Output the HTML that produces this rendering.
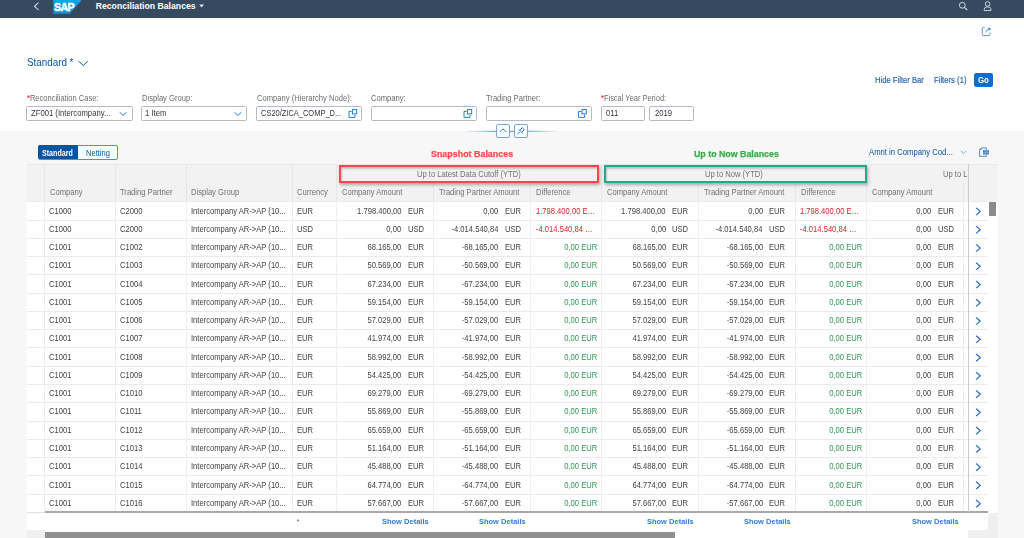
<!DOCTYPE html><html><head><meta charset="utf-8"><style>
html,body{margin:0;padding:0;}
body{width:1024px;height:538px;overflow:hidden;position:relative;background:#fff;font-family:"Liberation Sans", sans-serif;}
.t{position:absolute;line-height:normal;white-space:nowrap;}
.r{position:absolute;}
svg{position:absolute;overflow:visible;}
#w{position:absolute;left:0;top:0;width:1024px;height:538px;overflow:hidden;filter:blur(0.35px);}
</style></head><body><div id="w">
<div class="r" style="left:0.00px;top:0.00px;width:1024.00px;height:17.80px;background:#354a5f;"></div>
<svg style="left:0;top:0" width="1024" height="18"><polyline points="38.5,2.7 34.5,6.3 38.5,9.9" fill="none" stroke="#cfd6f2" stroke-width="1.1"/></svg>
<svg style="left:0;top:0" width="100" height="18"><defs><linearGradient id="sg" x1="0" y1="0" x2="0" y2="1"><stop offset="0" stop-color="#08aaea"/><stop offset="1" stop-color="#1a8fd6"/></linearGradient></defs><polygon points="53.3,-1 82.5,-1 69.8,13.8 53.3,13.8" fill="url(#sg)"/></svg>
<div class="t" style="top:0.90px;font-size:10.6px;color:#fff;font-weight:700;left:54.00px;transform-origin:0 0;letter-spacing:-0.6px;-webkit-text-stroke:0.45px #fff;">SAP</div>
<div class="t" style="top:0.90px;font-size:8.7px;color:#fff;font-weight:700;left:95.70px;transform-origin:0 0;">Reconciliation Balances</div>
<svg style="left:0;top:0" width="1024" height="18"><polygon points="199.2,4.6 204,4.6 201.6,7.4" fill="#d1e8ff"/></svg>
<svg style="left:0;top:0" width="1024" height="18"><circle cx="962.3" cy="5.3" r="2.9" fill="none" stroke="#d4e2f0" stroke-width="0.95"/><line x1="964.4" y1="7.4" x2="967.2" y2="10" stroke="#d4e2f0" stroke-width="1.1"/></svg>
<svg style="left:0;top:0" width="1024" height="18"><circle cx="987.6" cy="3.9" r="2.3" fill="none" stroke="#d4e2f0" stroke-width="0.9"/><path d="M984.2,10.5 L984.2,9.3 Q984.2,6.8 987.6,6.8 Q991,6.8 991,9.3 L991,10.5 Z" fill="none" stroke="#d4e2f0" stroke-width="0.9"/></svg>
<svg style="left:0;top:0" width="1024" height="60"><path d="M984.6,27.6 L983.2,27.6 Q982.2,27.6 982.2,28.6 L982.2,34.6 Q982.2,35.6 983.2,35.6 L989,35.6 Q990,35.6 990,34.6 L990,32.6" fill="none" stroke="#5a8ed0" stroke-width="0.95"/><path d="M985.5,32.6 Q986.3,29.6 989,29" fill="none" stroke="#5a8ed0" stroke-width="0.95"/><polygon points="988.3,27.2 991.2,28.9 988.6,30.8" fill="#4a84cc"/></svg>
<div class="t" style="top:56.60px;font-size:10.23px;color:#0854a0;left:26.70px;transform-origin:0 0;transform:scaleX(0.9615);">Standard *</div>
<svg style="left:0;top:0" width="200" height="80"><polyline points="78.6,61.1 83.2,65.5 87.8,61.1" fill="none" stroke="#0854a0" stroke-width="1"/></svg>
<div class="t" style="top:75.30px;font-size:8.87px;color:#2a66b0;left:874.70px;transform-origin:0 0;transform:scaleX(0.8621);-webkit-text-stroke:0.2px #2a66b0;">Hide Filter Bar</div>
<div class="t" style="top:75.30px;font-size:8.93px;color:#2a66b0;left:934.40px;transform-origin:0 0;transform:scaleX(0.8621);-webkit-text-stroke:0.2px #2a66b0;">Filters (1)</div>
<div class="r" style="left:973.9px;top:72.7px;width:19.2px;height:14.7px;background:#0a6ed1;border-radius:2.2px"></div>
<div class="t" style="top:75.30px;font-size:9.11px;color:#fff;font-weight:700;left:978.20px;transform-origin:0 0;transform:scaleX(0.8621);">Go</div>
<div class="t" style="top:92.90px;font-size:8.73px;color:#6a6d70;left:26.70px;transform-origin:0 0;transform:scaleX(0.8621);"><span style="color:#e00">*</span>Reconciliation Case:</div>
<div class="t" style="top:92.90px;font-size:8.82px;color:#6a6d70;left:141.70px;transform-origin:0 0;transform:scaleX(0.8621);">Display Group:</div>
<div class="t" style="top:92.90px;font-size:8.85px;color:#6a6d70;left:256.60px;transform-origin:0 0;transform:scaleX(0.8621);">Company (Hierarchy Node):</div>
<div class="t" style="top:92.90px;font-size:8.82px;color:#6a6d70;left:371.20px;transform-origin:0 0;transform:scaleX(0.8621);">Company:</div>
<div class="t" style="top:92.90px;font-size:8.82px;color:#6a6d70;left:486.10px;transform-origin:0 0;transform:scaleX(0.8621);">Trading Partner:</div>
<div class="t" style="top:92.90px;font-size:8.67px;color:#6a6d70;left:601.20px;transform-origin:0 0;transform:scaleX(0.8621);"><span style="color:#e00">*</span>Fiscal Year Period:</div>
<div class="r" style="left:26.40px;top:106.10px;width:104.20px;height:12.70px;background:#fff;border:1px solid #b3bac1;border-radius:1.5px"></div>
<div class="r" style="left:141.40px;top:106.10px;width:104.00px;height:12.70px;background:#fff;border:1px solid #b3bac1;border-radius:1.5px"></div>
<div class="r" style="left:256.30px;top:106.10px;width:104.10px;height:12.70px;background:#fff;border:1px solid #b3bac1;border-radius:1.5px"></div>
<div class="r" style="left:371.30px;top:106.10px;width:104.10px;height:12.70px;background:#fff;border:1px solid #b3bac1;border-radius:1.5px"></div>
<div class="r" style="left:486.10px;top:106.10px;width:103.60px;height:12.70px;background:#fff;border:1px solid #b3bac1;border-radius:1.5px"></div>
<div class="r" style="left:600.80px;top:106.10px;width:41.80px;height:12.70px;background:#fff;border:1px solid #b3bac1;border-radius:1.5px"></div>
<div class="r" style="left:649.40px;top:106.10px;width:42.40px;height:12.70px;background:#fff;border:1px solid #b3bac1;border-radius:1.5px"></div>
<div class="t" style="top:108.20px;font-size:8.93px;color:#32363a;left:31.10px;transform-origin:0 0;transform:scaleX(0.8621);">ZF001 (Intercompany...</div>
<div class="t" style="top:108.20px;font-size:8.93px;color:#32363a;left:144.60px;transform-origin:0 0;transform:scaleX(0.8621);">1 Item</div>
<div class="t" style="top:108.20px;font-size:8.68px;color:#32363a;left:261.20px;transform-origin:0 0;transform:scaleX(0.8621);">CS20/ZICA_COMP_D...</div>
<div class="t" style="top:108.20px;font-size:8.93px;color:#32363a;left:605.90px;transform-origin:0 0;transform:scaleX(0.8621);">011</div>
<div class="t" style="top:108.20px;font-size:8.93px;color:#32363a;left:654.50px;transform-origin:0 0;transform:scaleX(0.8621);">2019</div>
<svg style="left:0;top:0" width="1024" height="140"><polyline points="119.60,112.2 123.10,115.4 126.60,112.2" fill="none" stroke="#0a6ed1" stroke-width="0.9"/></svg>
<svg style="left:0;top:0" width="1024" height="140"><polyline points="234.50,112.2 238.00,115.4 241.50,112.2" fill="none" stroke="#0a6ed1" stroke-width="0.9"/></svg>
<svg style="left:0;top:0" width="1024" height="140"><path d="M351.60,111.4 L349.00,111.4 L349.00,117.4 L355.00,117.4 L355.00,114.8" fill="none" stroke="#0a6ed1" stroke-width="0.9"/><rect x="352.40" y="109.6" width="4.3" height="4.3" fill="#fff" stroke="#0a6ed1" stroke-width="0.9"/></svg>
<svg style="left:0;top:0" width="1024" height="140"><path d="M466.60,111.4 L464.00,111.4 L464.00,117.4 L470.00,117.4 L470.00,114.8" fill="none" stroke="#0a6ed1" stroke-width="0.9"/><rect x="467.40" y="109.6" width="4.3" height="4.3" fill="#fff" stroke="#0a6ed1" stroke-width="0.9"/></svg>
<svg style="left:0;top:0" width="1024" height="140"><path d="M581.20,111.4 L578.60,111.4 L578.60,117.4 L584.60,117.4 L584.60,114.8" fill="none" stroke="#0a6ed1" stroke-width="0.9"/><rect x="582.00" y="109.6" width="4.3" height="4.3" fill="#fff" stroke="#0a6ed1" stroke-width="0.9"/></svg>
<div class="r" style="left:0.00px;top:131.20px;width:1024.00px;height:406.80px;background:#f7f7f7;"></div>
<svg style="left:0;top:0" width="1024" height="140"><defs><linearGradient id="lg" x1="0" x2="1"><stop offset="0" stop-color="#0a6ed1" stop-opacity="0"/><stop offset="0.35" stop-color="#0a6ed1" stop-opacity="0.7"/><stop offset="0.65" stop-color="#0a6ed1" stop-opacity="0.7"/><stop offset="1" stop-color="#0a6ed1" stop-opacity="0"/></linearGradient></defs><rect x="463" y="130.8" width="97" height="1" fill="url(#lg)"/></svg>
<div class="r" style="left:496px;top:124.2px;width:12px;height:11.4px;background:#fff;border:1px solid #7aa6d8;border-radius:2px"></div>
<div class="r" style="left:514.1px;top:124.2px;width:12.2px;height:11.4px;background:#fff;border:1px solid #7aa6d8;border-radius:2px"></div>
<svg style="left:0;top:0" width="1024" height="140"><polyline points="499.8,132 503,128.8 506.2,132" fill="none" stroke="#0a6ed1" stroke-width="0.9"/><path d="M517.6,134.2 L519.8,131.9 M518.8,129.4 L522.6,133.2 M519.8,130.1 L522.3,127.6 L524.4,129.7 L521.9,132.2" fill="none" stroke="#0a6ed1" stroke-width="0.9"/></svg>
<div class="r" style="left:37.6px;top:145.4px;width:78.8px;height:13.1px;background:#fff;border:1px solid #4d8fd8;border-radius:2px"></div>
<div class="r" style="left:37.6px;top:145.4px;width:40.3px;height:14.1px;background:#0854a0;border-radius:2px 0 0 2px"></div>
<div class="t" style="top:148.60px;font-size:8.24px;color:#fff;font-weight:700;left:42.20px;transform-origin:0 0;transform:scaleX(0.8621);">Standard</div>
<div class="t" style="top:147.60px;font-size:8.75px;color:#0854a0;left:85.70px;transform-origin:0 0;transform:scaleX(0.8621);">Netting</div>
<div class="t" style="top:148.60px;font-size:9.35px;color:#ff4a4f;font-weight:700;left:431.10px;transform-origin:0 0;transform:scaleX(0.9524);-webkit-text-stroke:0.25px #ff4a4f;">Snapshot Balances</div>
<div class="t" style="top:148.60px;font-size:9.27px;color:#35ad48;font-weight:700;left:693.50px;transform-origin:0 0;transform:scaleX(0.9524);-webkit-text-stroke:0.25px #35ad48;">Up to Now Balances</div>
<div class="t" style="top:147.30px;font-size:8.93px;color:#0854a0;left:869.30px;transform-origin:0 0;transform:scaleX(0.8621);">Amnt in Company Cod...</div>
<svg style="left:0;top:0" width="1024" height="170"><polyline points="960.9,150.8 963.5,153.4 966.1,150.8" fill="none" stroke="#6a9cd8" stroke-width="0.8"/></svg>
<svg style="left:0;top:0" width="1024" height="170"><path d="M986.3,150.3 L986.3,147.9 L981.4,147.9 L979.6,149.7 L979.6,156.4 L986.3,156.4 L986.3,154.4" fill="none" stroke="#3b7bcc" stroke-width="0.85"/><path d="M981.4,147.9 L979.6,149.7 L981.4,149.7 Z" fill="#1f5fb0"/><rect x="983" y="150.2" width="5.9" height="4.3" fill="#3f7fcf"/><path d="M983.2,152.3 L988.7,152.3 M985,150.4 L985,154.3 M987,150.4 L987,154.3" stroke="#a9c6ea" stroke-width="0.45"/></svg>
<div class="r" style="left:27.00px;top:164.00px;width:970.50px;height:37.50px;background:#f2f2f2;"></div>
<div class="r" style="left:27.00px;top:164.00px;width:970.50px;height:0.90px;background:#e9e9e9;"></div>
<div class="r" style="left:27.00px;top:201.50px;width:960.50px;height:310.10px;background:#ffffff;"></div>
<div class="r" style="left:987.50px;top:201.50px;width:10.00px;height:311.10px;background:#ffffff;"></div>
<div class="r" style="left:989.40px;top:202.30px;width:6.30px;height:13.30px;background:#8c8c8c;"></div>
<div class="r" style="left:27.00px;top:512.60px;width:960.50px;height:17.70px;background:#ffffff;"></div>
<div class="r" style="left:987.50px;top:512.60px;width:10.00px;height:25.40px;background:#efefef;"></div>
<div class="r" style="left:27.00px;top:530.30px;width:17.70px;height:7.70px;background:#efefef;"></div>
<div class="r" style="left:44.70px;top:530.30px;width:923.60px;height:7.70px;background:#ffffff;"></div>
<div class="r" style="left:968.30px;top:530.30px;width:29.20px;height:7.70px;background:#efefef;"></div>
<div class="r" style="left:44.70px;top:532.00px;width:630.00px;height:6.00px;background:#8f8f8f;"></div>
<div class="r" style="left:44.00px;top:164.80px;width:1.00px;height:36.70px;background:#e6e6e6;"></div>
<div class="r" style="left:114.50px;top:164.80px;width:1.00px;height:36.70px;background:#e6e6e6;"></div>
<div class="r" style="left:185.50px;top:164.80px;width:1.00px;height:36.70px;background:#e6e6e6;"></div>
<div class="r" style="left:291.50px;top:164.80px;width:1.00px;height:36.70px;background:#e6e6e6;"></div>
<div class="r" style="left:335.50px;top:164.80px;width:1.00px;height:36.70px;background:#e6e6e6;"></div>
<div class="r" style="left:600.50px;top:164.80px;width:1.00px;height:36.70px;background:#e6e6e6;"></div>
<div class="r" style="left:866.00px;top:164.80px;width:1.00px;height:36.70px;background:#e6e6e6;"></div>
<div class="r" style="left:433.10px;top:183.30px;width:1.00px;height:18.20px;background:#e6e6e6;"></div>
<div class="r" style="left:530.00px;top:183.30px;width:1.00px;height:18.20px;background:#e6e6e6;"></div>
<div class="r" style="left:697.90px;top:183.30px;width:1.00px;height:18.20px;background:#e6e6e6;"></div>
<div class="r" style="left:794.80px;top:183.30px;width:1.00px;height:18.20px;background:#e6e6e6;"></div>
<div class="r" style="left:963.10px;top:183.30px;width:1.00px;height:18.20px;background:#e6e6e6;"></div>
<div class="r" style="left:27.00px;top:201.40px;width:960.50px;height:1.00px;background:#eaeaea;"></div>
<div class="r" style="left:27.00px;top:219.66px;width:960.50px;height:1.00px;background:#eaeaea;"></div>
<div class="r" style="left:27.00px;top:237.92px;width:960.50px;height:1.00px;background:#eaeaea;"></div>
<div class="r" style="left:27.00px;top:256.18px;width:960.50px;height:1.00px;background:#eaeaea;"></div>
<div class="r" style="left:27.00px;top:274.44px;width:960.50px;height:1.00px;background:#eaeaea;"></div>
<div class="r" style="left:27.00px;top:292.70px;width:960.50px;height:1.00px;background:#eaeaea;"></div>
<div class="r" style="left:27.00px;top:310.96px;width:960.50px;height:1.00px;background:#eaeaea;"></div>
<div class="r" style="left:27.00px;top:329.22px;width:960.50px;height:1.00px;background:#eaeaea;"></div>
<div class="r" style="left:27.00px;top:347.48px;width:960.50px;height:1.00px;background:#eaeaea;"></div>
<div class="r" style="left:27.00px;top:365.74px;width:960.50px;height:1.00px;background:#eaeaea;"></div>
<div class="r" style="left:27.00px;top:384.00px;width:960.50px;height:1.00px;background:#eaeaea;"></div>
<div class="r" style="left:27.00px;top:402.26px;width:960.50px;height:1.00px;background:#eaeaea;"></div>
<div class="r" style="left:27.00px;top:420.52px;width:960.50px;height:1.00px;background:#eaeaea;"></div>
<div class="r" style="left:27.00px;top:438.78px;width:960.50px;height:1.00px;background:#eaeaea;"></div>
<div class="r" style="left:27.00px;top:457.04px;width:960.50px;height:1.00px;background:#eaeaea;"></div>
<div class="r" style="left:27.00px;top:475.30px;width:960.50px;height:1.00px;background:#eaeaea;"></div>
<div class="r" style="left:27.00px;top:493.56px;width:960.50px;height:1.00px;background:#eaeaea;"></div>
<div class="r" style="left:44.00px;top:201.50px;width:1.00px;height:310.10px;background:#eeeeee;"></div>
<div class="r" style="left:114.50px;top:201.50px;width:1.00px;height:310.10px;background:#eeeeee;"></div>
<div class="r" style="left:185.50px;top:201.50px;width:1.00px;height:310.10px;background:#eeeeee;"></div>
<div class="r" style="left:291.50px;top:201.50px;width:1.00px;height:310.10px;background:#eeeeee;"></div>
<div class="r" style="left:335.50px;top:201.50px;width:1.00px;height:310.10px;background:#eeeeee;"></div>
<div class="r" style="left:600.50px;top:201.50px;width:1.00px;height:310.10px;background:#eeeeee;"></div>
<div class="r" style="left:866.00px;top:201.50px;width:1.00px;height:310.10px;background:#eeeeee;"></div>
<div class="r" style="left:433.10px;top:201.50px;width:1.00px;height:310.10px;background:#eeeeee;"></div>
<div class="r" style="left:530.00px;top:201.50px;width:1.00px;height:310.10px;background:#eeeeee;"></div>
<div class="r" style="left:697.90px;top:201.50px;width:1.00px;height:310.10px;background:#eeeeee;"></div>
<div class="r" style="left:794.80px;top:201.50px;width:1.00px;height:310.10px;background:#eeeeee;"></div>
<div class="r" style="left:963.10px;top:201.50px;width:1.00px;height:310.10px;background:#eeeeee;"></div>
<div class="r" style="left:44.50px;top:510.60px;width:943.00px;height:2.00px;background:#a8a8a8;"></div>
<div class="r" style="left:27.00px;top:511.60px;width:17.50px;height:1.00px;background:#e0e0e0;"></div>
<div class="r" style="left:967.80px;top:164.00px;width:1.60px;height:347.60px;background:#cbcbcb;"></div>
<div class="t" style="top:187.20px;font-size:8.82px;color:#6e7174;left:49.70px;transform-origin:0 0;transform:scaleX(0.8621);">Company</div>
<div class="t" style="top:187.20px;font-size:8.82px;color:#6e7174;left:120.20px;transform-origin:0 0;transform:scaleX(0.8621);">Trading Partner</div>
<div class="t" style="top:187.20px;font-size:8.82px;color:#6e7174;left:191.00px;transform-origin:0 0;transform:scaleX(0.8621);">Display Group</div>
<div class="t" style="top:187.20px;font-size:8.82px;color:#6e7174;left:297.00px;transform-origin:0 0;transform:scaleX(0.8621);">Currency</div>
<div class="t" style="top:187.20px;font-size:8.82px;color:#6e7174;left:341.60px;transform-origin:0 0;transform:scaleX(0.8621);">Company Amount</div>
<div class="t" style="top:187.20px;font-size:8.82px;color:#6e7174;left:438.90px;transform-origin:0 0;transform:scaleX(0.8621);">Trading Partner Amount</div>
<div class="t" style="top:187.20px;font-size:8.82px;color:#6e7174;left:535.70px;transform-origin:0 0;transform:scaleX(0.8621);">Difference</div>
<div class="t" style="top:187.20px;font-size:8.82px;color:#6e7174;left:606.60px;transform-origin:0 0;transform:scaleX(0.8621);">Company Amount</div>
<div class="t" style="top:187.20px;font-size:8.82px;color:#6e7174;left:703.70px;transform-origin:0 0;transform:scaleX(0.8621);">Trading Partner Amount</div>
<div class="t" style="top:187.20px;font-size:8.82px;color:#6e7174;left:800.50px;transform-origin:0 0;transform:scaleX(0.8621);">Difference</div>
<div class="t" style="top:187.20px;font-size:8.82px;color:#6e7174;left:871.90px;transform-origin:0 0;transform:scaleX(0.8621);">Company Amount</div>
<div class="t" style="top:169.10px;font-size:8.82px;color:#6e7174;left:416.70px;transform-origin:0 0;transform:scaleX(0.8621);">Up to Latest Data Cutoff (YTD)</div>
<div class="t" style="top:169.10px;font-size:8.82px;color:#6e7174;left:704.80px;transform-origin:0 0;transform:scaleX(0.8621);">Up to Now (YTD)</div>
<div class="t" style="top:169.10px;font-size:8.82px;color:#6e7174;left:943.10px;transform-origin:0 0;transform:scaleX(0.8621);width:28.42px;overflow:hidden;text-overflow:ellipsis;text-overflow:clip;">Up to Latest Data Cutoff (YTD)</div>
<div class="t" style="top:205.60px;font-size:8.82px;color:#3f4246;left:49.20px;transform-origin:0 0;transform:scaleX(0.8621);">C1000</div>
<div class="t" style="top:205.60px;font-size:8.82px;color:#3f4246;left:120.00px;transform-origin:0 0;transform:scaleX(0.8621);">C2000</div>
<div class="t" style="top:205.60px;font-size:8.82px;color:#3f4246;left:191.00px;transform-origin:0 0;transform:scaleX(0.8621);width:112.52px;overflow:hidden;text-overflow:ellipsis;">Intercompany AR-&gt;AP (10...</div>
<div class="t" style="top:205.60px;font-size:8.82px;color:#3f4246;left:297.00px;transform-origin:0 0;transform:scaleX(0.8621);">EUR</div>
<div class="t" style="top:205.60px;font-size:8.82px;color:#3f4246;right:622.90px;text-align:right;transform-origin:100% 0;transform:scaleX(0.8621);">1.798.400,00</div>
<div class="t" style="top:205.60px;font-size:8.82px;color:#3f4246;left:407.60px;transform-origin:0 0;transform:scaleX(0.8621);">EUR</div>
<div class="t" style="top:205.60px;font-size:8.82px;color:#3f4246;right:526.00px;text-align:right;transform-origin:100% 0;transform:scaleX(0.8621);">0,00</div>
<div class="t" style="top:205.60px;font-size:8.82px;color:#3f4246;left:504.50px;transform-origin:0 0;transform:scaleX(0.8621);">EUR</div>
<div class="t" style="top:205.60px;font-size:8.82px;color:#d6262b;left:535.50px;transform-origin:0 0;transform:scaleX(0.8621);width:70.18px;overflow:hidden;text-overflow:ellipsis;">1.798.400,00 EUR</div>
<div class="t" style="top:205.60px;font-size:8.82px;color:#3f4246;right:358.10px;text-align:right;transform-origin:100% 0;transform:scaleX(0.8621);">1.798.400,00</div>
<div class="t" style="top:205.60px;font-size:8.82px;color:#3f4246;left:672.40px;transform-origin:0 0;transform:scaleX(0.8621);">EUR</div>
<div class="t" style="top:205.60px;font-size:8.82px;color:#3f4246;right:261.20px;text-align:right;transform-origin:100% 0;transform:scaleX(0.8621);">0,00</div>
<div class="t" style="top:205.60px;font-size:8.82px;color:#3f4246;left:769.30px;transform-origin:0 0;transform:scaleX(0.8621);">EUR</div>
<div class="t" style="top:205.60px;font-size:8.82px;color:#d6262b;left:800.30px;transform-origin:0 0;transform:scaleX(0.8621);width:70.18px;overflow:hidden;text-overflow:ellipsis;">1.798.400,00 EUR</div>
<div class="t" style="top:205.60px;font-size:8.82px;color:#3f4246;right:92.90px;text-align:right;transform-origin:100% 0;transform:scaleX(0.8621);">0,00</div>
<div class="t" style="top:205.60px;font-size:8.82px;color:#3f4246;left:937.60px;transform-origin:0 0;transform:scaleX(0.8621);">EUR</div>
<svg style="left:0;top:0" width="1024" height="538"><polyline points="976.2,207.90 980.2,211.50 976.2,215.10" fill="none" stroke="#2a68b8" stroke-width="1.2"/></svg>
<div class="t" style="top:223.86px;font-size:8.82px;color:#3f4246;left:49.20px;transform-origin:0 0;transform:scaleX(0.8621);">C1000</div>
<div class="t" style="top:223.86px;font-size:8.82px;color:#3f4246;left:120.00px;transform-origin:0 0;transform:scaleX(0.8621);">C2000</div>
<div class="t" style="top:223.86px;font-size:8.82px;color:#3f4246;left:191.00px;transform-origin:0 0;transform:scaleX(0.8621);width:112.52px;overflow:hidden;text-overflow:ellipsis;">Intercompany AR-&gt;AP (10...</div>
<div class="t" style="top:223.86px;font-size:8.82px;color:#3f4246;left:297.00px;transform-origin:0 0;transform:scaleX(0.8621);">USD</div>
<div class="t" style="top:223.86px;font-size:8.82px;color:#3f4246;right:622.90px;text-align:right;transform-origin:100% 0;transform:scaleX(0.8621);">0,00</div>
<div class="t" style="top:223.86px;font-size:8.82px;color:#3f4246;left:407.60px;transform-origin:0 0;transform:scaleX(0.8621);">USD</div>
<div class="t" style="top:223.86px;font-size:8.82px;color:#3f4246;right:526.00px;text-align:right;transform-origin:100% 0;transform:scaleX(0.8621);">-4.014.540,84</div>
<div class="t" style="top:223.86px;font-size:8.82px;color:#3f4246;left:504.50px;transform-origin:0 0;transform:scaleX(0.8621);">USD</div>
<div class="t" style="top:223.86px;font-size:8.82px;color:#d6262b;left:535.50px;transform-origin:0 0;transform:scaleX(0.8621);width:70.18px;overflow:hidden;text-overflow:ellipsis;">-4.014.540,84 USD</div>
<div class="t" style="top:223.86px;font-size:8.82px;color:#3f4246;right:358.10px;text-align:right;transform-origin:100% 0;transform:scaleX(0.8621);">0,00</div>
<div class="t" style="top:223.86px;font-size:8.82px;color:#3f4246;left:672.40px;transform-origin:0 0;transform:scaleX(0.8621);">USD</div>
<div class="t" style="top:223.86px;font-size:8.82px;color:#3f4246;right:261.20px;text-align:right;transform-origin:100% 0;transform:scaleX(0.8621);">-4.014.540,84</div>
<div class="t" style="top:223.86px;font-size:8.82px;color:#3f4246;left:769.30px;transform-origin:0 0;transform:scaleX(0.8621);">USD</div>
<div class="t" style="top:223.86px;font-size:8.82px;color:#d6262b;left:800.30px;transform-origin:0 0;transform:scaleX(0.8621);width:70.18px;overflow:hidden;text-overflow:ellipsis;">-4.014.540,84 USD</div>
<div class="t" style="top:223.86px;font-size:8.82px;color:#3f4246;right:92.90px;text-align:right;transform-origin:100% 0;transform:scaleX(0.8621);">0,00</div>
<div class="t" style="top:223.86px;font-size:8.82px;color:#3f4246;left:937.60px;transform-origin:0 0;transform:scaleX(0.8621);">USD</div>
<svg style="left:0;top:0" width="1024" height="538"><polyline points="976.2,226.16 980.2,229.76 976.2,233.36" fill="none" stroke="#2a68b8" stroke-width="1.2"/></svg>
<div class="t" style="top:242.12px;font-size:8.82px;color:#3f4246;left:49.20px;transform-origin:0 0;transform:scaleX(0.8621);">C1001</div>
<div class="t" style="top:242.12px;font-size:8.82px;color:#3f4246;left:120.00px;transform-origin:0 0;transform:scaleX(0.8621);">C1002</div>
<div class="t" style="top:242.12px;font-size:8.82px;color:#3f4246;left:191.00px;transform-origin:0 0;transform:scaleX(0.8621);width:112.52px;overflow:hidden;text-overflow:ellipsis;">Intercompany AR-&gt;AP (10...</div>
<div class="t" style="top:242.12px;font-size:8.82px;color:#3f4246;left:297.00px;transform-origin:0 0;transform:scaleX(0.8621);">EUR</div>
<div class="t" style="top:242.12px;font-size:8.82px;color:#3f4246;right:622.90px;text-align:right;transform-origin:100% 0;transform:scaleX(0.8621);">68.165,00</div>
<div class="t" style="top:242.12px;font-size:8.82px;color:#3f4246;left:407.60px;transform-origin:0 0;transform:scaleX(0.8621);">EUR</div>
<div class="t" style="top:242.12px;font-size:8.82px;color:#3f4246;right:526.00px;text-align:right;transform-origin:100% 0;transform:scaleX(0.8621);">-68.165,00</div>
<div class="t" style="top:242.12px;font-size:8.82px;color:#3f4246;left:504.50px;transform-origin:0 0;transform:scaleX(0.8621);">EUR</div>
<div class="t" style="top:242.12px;font-size:8.82px;color:#2f9558;right:427.10px;text-align:right;transform-origin:100% 0;transform:scaleX(0.8621);">0,00 EUR</div>
<div class="t" style="top:242.12px;font-size:8.82px;color:#3f4246;right:358.10px;text-align:right;transform-origin:100% 0;transform:scaleX(0.8621);">68.165,00</div>
<div class="t" style="top:242.12px;font-size:8.82px;color:#3f4246;left:672.40px;transform-origin:0 0;transform:scaleX(0.8621);">EUR</div>
<div class="t" style="top:242.12px;font-size:8.82px;color:#3f4246;right:261.20px;text-align:right;transform-origin:100% 0;transform:scaleX(0.8621);">-68.165,00</div>
<div class="t" style="top:242.12px;font-size:8.82px;color:#3f4246;left:769.30px;transform-origin:0 0;transform:scaleX(0.8621);">EUR</div>
<div class="t" style="top:242.12px;font-size:8.82px;color:#2f9558;right:161.60px;text-align:right;transform-origin:100% 0;transform:scaleX(0.8621);">0,00 EUR</div>
<div class="t" style="top:242.12px;font-size:8.82px;color:#3f4246;right:92.90px;text-align:right;transform-origin:100% 0;transform:scaleX(0.8621);">0,00</div>
<div class="t" style="top:242.12px;font-size:8.82px;color:#3f4246;left:937.60px;transform-origin:0 0;transform:scaleX(0.8621);">EUR</div>
<svg style="left:0;top:0" width="1024" height="538"><polyline points="976.2,244.42 980.2,248.02 976.2,251.62" fill="none" stroke="#2a68b8" stroke-width="1.2"/></svg>
<div class="t" style="top:260.38px;font-size:8.82px;color:#3f4246;left:49.20px;transform-origin:0 0;transform:scaleX(0.8621);">C1001</div>
<div class="t" style="top:260.38px;font-size:8.82px;color:#3f4246;left:120.00px;transform-origin:0 0;transform:scaleX(0.8621);">C1003</div>
<div class="t" style="top:260.38px;font-size:8.82px;color:#3f4246;left:191.00px;transform-origin:0 0;transform:scaleX(0.8621);width:112.52px;overflow:hidden;text-overflow:ellipsis;">Intercompany AR-&gt;AP (10...</div>
<div class="t" style="top:260.38px;font-size:8.82px;color:#3f4246;left:297.00px;transform-origin:0 0;transform:scaleX(0.8621);">EUR</div>
<div class="t" style="top:260.38px;font-size:8.82px;color:#3f4246;right:622.90px;text-align:right;transform-origin:100% 0;transform:scaleX(0.8621);">50.569,00</div>
<div class="t" style="top:260.38px;font-size:8.82px;color:#3f4246;left:407.60px;transform-origin:0 0;transform:scaleX(0.8621);">EUR</div>
<div class="t" style="top:260.38px;font-size:8.82px;color:#3f4246;right:526.00px;text-align:right;transform-origin:100% 0;transform:scaleX(0.8621);">-50.569,00</div>
<div class="t" style="top:260.38px;font-size:8.82px;color:#3f4246;left:504.50px;transform-origin:0 0;transform:scaleX(0.8621);">EUR</div>
<div class="t" style="top:260.38px;font-size:8.82px;color:#2f9558;right:427.10px;text-align:right;transform-origin:100% 0;transform:scaleX(0.8621);">0,00 EUR</div>
<div class="t" style="top:260.38px;font-size:8.82px;color:#3f4246;right:358.10px;text-align:right;transform-origin:100% 0;transform:scaleX(0.8621);">50.569,00</div>
<div class="t" style="top:260.38px;font-size:8.82px;color:#3f4246;left:672.40px;transform-origin:0 0;transform:scaleX(0.8621);">EUR</div>
<div class="t" style="top:260.38px;font-size:8.82px;color:#3f4246;right:261.20px;text-align:right;transform-origin:100% 0;transform:scaleX(0.8621);">-50.569,00</div>
<div class="t" style="top:260.38px;font-size:8.82px;color:#3f4246;left:769.30px;transform-origin:0 0;transform:scaleX(0.8621);">EUR</div>
<div class="t" style="top:260.38px;font-size:8.82px;color:#2f9558;right:161.60px;text-align:right;transform-origin:100% 0;transform:scaleX(0.8621);">0,00 EUR</div>
<div class="t" style="top:260.38px;font-size:8.82px;color:#3f4246;right:92.90px;text-align:right;transform-origin:100% 0;transform:scaleX(0.8621);">0,00</div>
<div class="t" style="top:260.38px;font-size:8.82px;color:#3f4246;left:937.60px;transform-origin:0 0;transform:scaleX(0.8621);">EUR</div>
<svg style="left:0;top:0" width="1024" height="538"><polyline points="976.2,262.68 980.2,266.28 976.2,269.88" fill="none" stroke="#2a68b8" stroke-width="1.2"/></svg>
<div class="t" style="top:278.64px;font-size:8.82px;color:#3f4246;left:49.20px;transform-origin:0 0;transform:scaleX(0.8621);">C1001</div>
<div class="t" style="top:278.64px;font-size:8.82px;color:#3f4246;left:120.00px;transform-origin:0 0;transform:scaleX(0.8621);">C1004</div>
<div class="t" style="top:278.64px;font-size:8.82px;color:#3f4246;left:191.00px;transform-origin:0 0;transform:scaleX(0.8621);width:112.52px;overflow:hidden;text-overflow:ellipsis;">Intercompany AR-&gt;AP (10...</div>
<div class="t" style="top:278.64px;font-size:8.82px;color:#3f4246;left:297.00px;transform-origin:0 0;transform:scaleX(0.8621);">EUR</div>
<div class="t" style="top:278.64px;font-size:8.82px;color:#3f4246;right:622.90px;text-align:right;transform-origin:100% 0;transform:scaleX(0.8621);">67.234,00</div>
<div class="t" style="top:278.64px;font-size:8.82px;color:#3f4246;left:407.60px;transform-origin:0 0;transform:scaleX(0.8621);">EUR</div>
<div class="t" style="top:278.64px;font-size:8.82px;color:#3f4246;right:526.00px;text-align:right;transform-origin:100% 0;transform:scaleX(0.8621);">-67.234,00</div>
<div class="t" style="top:278.64px;font-size:8.82px;color:#3f4246;left:504.50px;transform-origin:0 0;transform:scaleX(0.8621);">EUR</div>
<div class="t" style="top:278.64px;font-size:8.82px;color:#2f9558;right:427.10px;text-align:right;transform-origin:100% 0;transform:scaleX(0.8621);">0,00 EUR</div>
<div class="t" style="top:278.64px;font-size:8.82px;color:#3f4246;right:358.10px;text-align:right;transform-origin:100% 0;transform:scaleX(0.8621);">67.234,00</div>
<div class="t" style="top:278.64px;font-size:8.82px;color:#3f4246;left:672.40px;transform-origin:0 0;transform:scaleX(0.8621);">EUR</div>
<div class="t" style="top:278.64px;font-size:8.82px;color:#3f4246;right:261.20px;text-align:right;transform-origin:100% 0;transform:scaleX(0.8621);">-67.234,00</div>
<div class="t" style="top:278.64px;font-size:8.82px;color:#3f4246;left:769.30px;transform-origin:0 0;transform:scaleX(0.8621);">EUR</div>
<div class="t" style="top:278.64px;font-size:8.82px;color:#2f9558;right:161.60px;text-align:right;transform-origin:100% 0;transform:scaleX(0.8621);">0,00 EUR</div>
<div class="t" style="top:278.64px;font-size:8.82px;color:#3f4246;right:92.90px;text-align:right;transform-origin:100% 0;transform:scaleX(0.8621);">0,00</div>
<div class="t" style="top:278.64px;font-size:8.82px;color:#3f4246;left:937.60px;transform-origin:0 0;transform:scaleX(0.8621);">EUR</div>
<svg style="left:0;top:0" width="1024" height="538"><polyline points="976.2,280.94 980.2,284.54 976.2,288.14" fill="none" stroke="#2a68b8" stroke-width="1.2"/></svg>
<div class="t" style="top:296.90px;font-size:8.82px;color:#3f4246;left:49.20px;transform-origin:0 0;transform:scaleX(0.8621);">C1001</div>
<div class="t" style="top:296.90px;font-size:8.82px;color:#3f4246;left:120.00px;transform-origin:0 0;transform:scaleX(0.8621);">C1005</div>
<div class="t" style="top:296.90px;font-size:8.82px;color:#3f4246;left:191.00px;transform-origin:0 0;transform:scaleX(0.8621);width:112.52px;overflow:hidden;text-overflow:ellipsis;">Intercompany AR-&gt;AP (10...</div>
<div class="t" style="top:296.90px;font-size:8.82px;color:#3f4246;left:297.00px;transform-origin:0 0;transform:scaleX(0.8621);">EUR</div>
<div class="t" style="top:296.90px;font-size:8.82px;color:#3f4246;right:622.90px;text-align:right;transform-origin:100% 0;transform:scaleX(0.8621);">59.154,00</div>
<div class="t" style="top:296.90px;font-size:8.82px;color:#3f4246;left:407.60px;transform-origin:0 0;transform:scaleX(0.8621);">EUR</div>
<div class="t" style="top:296.90px;font-size:8.82px;color:#3f4246;right:526.00px;text-align:right;transform-origin:100% 0;transform:scaleX(0.8621);">-59.154,00</div>
<div class="t" style="top:296.90px;font-size:8.82px;color:#3f4246;left:504.50px;transform-origin:0 0;transform:scaleX(0.8621);">EUR</div>
<div class="t" style="top:296.90px;font-size:8.82px;color:#2f9558;right:427.10px;text-align:right;transform-origin:100% 0;transform:scaleX(0.8621);">0,00 EUR</div>
<div class="t" style="top:296.90px;font-size:8.82px;color:#3f4246;right:358.10px;text-align:right;transform-origin:100% 0;transform:scaleX(0.8621);">59.154,00</div>
<div class="t" style="top:296.90px;font-size:8.82px;color:#3f4246;left:672.40px;transform-origin:0 0;transform:scaleX(0.8621);">EUR</div>
<div class="t" style="top:296.90px;font-size:8.82px;color:#3f4246;right:261.20px;text-align:right;transform-origin:100% 0;transform:scaleX(0.8621);">-59.154,00</div>
<div class="t" style="top:296.90px;font-size:8.82px;color:#3f4246;left:769.30px;transform-origin:0 0;transform:scaleX(0.8621);">EUR</div>
<div class="t" style="top:296.90px;font-size:8.82px;color:#2f9558;right:161.60px;text-align:right;transform-origin:100% 0;transform:scaleX(0.8621);">0,00 EUR</div>
<div class="t" style="top:296.90px;font-size:8.82px;color:#3f4246;right:92.90px;text-align:right;transform-origin:100% 0;transform:scaleX(0.8621);">0,00</div>
<div class="t" style="top:296.90px;font-size:8.82px;color:#3f4246;left:937.60px;transform-origin:0 0;transform:scaleX(0.8621);">EUR</div>
<svg style="left:0;top:0" width="1024" height="538"><polyline points="976.2,299.20 980.2,302.80 976.2,306.40" fill="none" stroke="#2a68b8" stroke-width="1.2"/></svg>
<div class="t" style="top:315.16px;font-size:8.82px;color:#3f4246;left:49.20px;transform-origin:0 0;transform:scaleX(0.8621);">C1001</div>
<div class="t" style="top:315.16px;font-size:8.82px;color:#3f4246;left:120.00px;transform-origin:0 0;transform:scaleX(0.8621);">C1006</div>
<div class="t" style="top:315.16px;font-size:8.82px;color:#3f4246;left:191.00px;transform-origin:0 0;transform:scaleX(0.8621);width:112.52px;overflow:hidden;text-overflow:ellipsis;">Intercompany AR-&gt;AP (10...</div>
<div class="t" style="top:315.16px;font-size:8.82px;color:#3f4246;left:297.00px;transform-origin:0 0;transform:scaleX(0.8621);">EUR</div>
<div class="t" style="top:315.16px;font-size:8.82px;color:#3f4246;right:622.90px;text-align:right;transform-origin:100% 0;transform:scaleX(0.8621);">57.029,00</div>
<div class="t" style="top:315.16px;font-size:8.82px;color:#3f4246;left:407.60px;transform-origin:0 0;transform:scaleX(0.8621);">EUR</div>
<div class="t" style="top:315.16px;font-size:8.82px;color:#3f4246;right:526.00px;text-align:right;transform-origin:100% 0;transform:scaleX(0.8621);">-57.029,00</div>
<div class="t" style="top:315.16px;font-size:8.82px;color:#3f4246;left:504.50px;transform-origin:0 0;transform:scaleX(0.8621);">EUR</div>
<div class="t" style="top:315.16px;font-size:8.82px;color:#2f9558;right:427.10px;text-align:right;transform-origin:100% 0;transform:scaleX(0.8621);">0,00 EUR</div>
<div class="t" style="top:315.16px;font-size:8.82px;color:#3f4246;right:358.10px;text-align:right;transform-origin:100% 0;transform:scaleX(0.8621);">57.029,00</div>
<div class="t" style="top:315.16px;font-size:8.82px;color:#3f4246;left:672.40px;transform-origin:0 0;transform:scaleX(0.8621);">EUR</div>
<div class="t" style="top:315.16px;font-size:8.82px;color:#3f4246;right:261.20px;text-align:right;transform-origin:100% 0;transform:scaleX(0.8621);">-57.029,00</div>
<div class="t" style="top:315.16px;font-size:8.82px;color:#3f4246;left:769.30px;transform-origin:0 0;transform:scaleX(0.8621);">EUR</div>
<div class="t" style="top:315.16px;font-size:8.82px;color:#2f9558;right:161.60px;text-align:right;transform-origin:100% 0;transform:scaleX(0.8621);">0,00 EUR</div>
<div class="t" style="top:315.16px;font-size:8.82px;color:#3f4246;right:92.90px;text-align:right;transform-origin:100% 0;transform:scaleX(0.8621);">0,00</div>
<div class="t" style="top:315.16px;font-size:8.82px;color:#3f4246;left:937.60px;transform-origin:0 0;transform:scaleX(0.8621);">EUR</div>
<svg style="left:0;top:0" width="1024" height="538"><polyline points="976.2,317.46 980.2,321.06 976.2,324.66" fill="none" stroke="#2a68b8" stroke-width="1.2"/></svg>
<div class="t" style="top:333.42px;font-size:8.82px;color:#3f4246;left:49.20px;transform-origin:0 0;transform:scaleX(0.8621);">C1001</div>
<div class="t" style="top:333.42px;font-size:8.82px;color:#3f4246;left:120.00px;transform-origin:0 0;transform:scaleX(0.8621);">C1007</div>
<div class="t" style="top:333.42px;font-size:8.82px;color:#3f4246;left:191.00px;transform-origin:0 0;transform:scaleX(0.8621);width:112.52px;overflow:hidden;text-overflow:ellipsis;">Intercompany AR-&gt;AP (10...</div>
<div class="t" style="top:333.42px;font-size:8.82px;color:#3f4246;left:297.00px;transform-origin:0 0;transform:scaleX(0.8621);">EUR</div>
<div class="t" style="top:333.42px;font-size:8.82px;color:#3f4246;right:622.90px;text-align:right;transform-origin:100% 0;transform:scaleX(0.8621);">41.974,00</div>
<div class="t" style="top:333.42px;font-size:8.82px;color:#3f4246;left:407.60px;transform-origin:0 0;transform:scaleX(0.8621);">EUR</div>
<div class="t" style="top:333.42px;font-size:8.82px;color:#3f4246;right:526.00px;text-align:right;transform-origin:100% 0;transform:scaleX(0.8621);">-41.974,00</div>
<div class="t" style="top:333.42px;font-size:8.82px;color:#3f4246;left:504.50px;transform-origin:0 0;transform:scaleX(0.8621);">EUR</div>
<div class="t" style="top:333.42px;font-size:8.82px;color:#2f9558;right:427.10px;text-align:right;transform-origin:100% 0;transform:scaleX(0.8621);">0,00 EUR</div>
<div class="t" style="top:333.42px;font-size:8.82px;color:#3f4246;right:358.10px;text-align:right;transform-origin:100% 0;transform:scaleX(0.8621);">41.974,00</div>
<div class="t" style="top:333.42px;font-size:8.82px;color:#3f4246;left:672.40px;transform-origin:0 0;transform:scaleX(0.8621);">EUR</div>
<div class="t" style="top:333.42px;font-size:8.82px;color:#3f4246;right:261.20px;text-align:right;transform-origin:100% 0;transform:scaleX(0.8621);">-41.974,00</div>
<div class="t" style="top:333.42px;font-size:8.82px;color:#3f4246;left:769.30px;transform-origin:0 0;transform:scaleX(0.8621);">EUR</div>
<div class="t" style="top:333.42px;font-size:8.82px;color:#2f9558;right:161.60px;text-align:right;transform-origin:100% 0;transform:scaleX(0.8621);">0,00 EUR</div>
<div class="t" style="top:333.42px;font-size:8.82px;color:#3f4246;right:92.90px;text-align:right;transform-origin:100% 0;transform:scaleX(0.8621);">0,00</div>
<div class="t" style="top:333.42px;font-size:8.82px;color:#3f4246;left:937.60px;transform-origin:0 0;transform:scaleX(0.8621);">EUR</div>
<svg style="left:0;top:0" width="1024" height="538"><polyline points="976.2,335.72 980.2,339.32 976.2,342.92" fill="none" stroke="#2a68b8" stroke-width="1.2"/></svg>
<div class="t" style="top:351.68px;font-size:8.82px;color:#3f4246;left:49.20px;transform-origin:0 0;transform:scaleX(0.8621);">C1001</div>
<div class="t" style="top:351.68px;font-size:8.82px;color:#3f4246;left:120.00px;transform-origin:0 0;transform:scaleX(0.8621);">C1008</div>
<div class="t" style="top:351.68px;font-size:8.82px;color:#3f4246;left:191.00px;transform-origin:0 0;transform:scaleX(0.8621);width:112.52px;overflow:hidden;text-overflow:ellipsis;">Intercompany AR-&gt;AP (10...</div>
<div class="t" style="top:351.68px;font-size:8.82px;color:#3f4246;left:297.00px;transform-origin:0 0;transform:scaleX(0.8621);">EUR</div>
<div class="t" style="top:351.68px;font-size:8.82px;color:#3f4246;right:622.90px;text-align:right;transform-origin:100% 0;transform:scaleX(0.8621);">58.992,00</div>
<div class="t" style="top:351.68px;font-size:8.82px;color:#3f4246;left:407.60px;transform-origin:0 0;transform:scaleX(0.8621);">EUR</div>
<div class="t" style="top:351.68px;font-size:8.82px;color:#3f4246;right:526.00px;text-align:right;transform-origin:100% 0;transform:scaleX(0.8621);">-58.992,00</div>
<div class="t" style="top:351.68px;font-size:8.82px;color:#3f4246;left:504.50px;transform-origin:0 0;transform:scaleX(0.8621);">EUR</div>
<div class="t" style="top:351.68px;font-size:8.82px;color:#2f9558;right:427.10px;text-align:right;transform-origin:100% 0;transform:scaleX(0.8621);">0,00 EUR</div>
<div class="t" style="top:351.68px;font-size:8.82px;color:#3f4246;right:358.10px;text-align:right;transform-origin:100% 0;transform:scaleX(0.8621);">58.992,00</div>
<div class="t" style="top:351.68px;font-size:8.82px;color:#3f4246;left:672.40px;transform-origin:0 0;transform:scaleX(0.8621);">EUR</div>
<div class="t" style="top:351.68px;font-size:8.82px;color:#3f4246;right:261.20px;text-align:right;transform-origin:100% 0;transform:scaleX(0.8621);">-58.992,00</div>
<div class="t" style="top:351.68px;font-size:8.82px;color:#3f4246;left:769.30px;transform-origin:0 0;transform:scaleX(0.8621);">EUR</div>
<div class="t" style="top:351.68px;font-size:8.82px;color:#2f9558;right:161.60px;text-align:right;transform-origin:100% 0;transform:scaleX(0.8621);">0,00 EUR</div>
<div class="t" style="top:351.68px;font-size:8.82px;color:#3f4246;right:92.90px;text-align:right;transform-origin:100% 0;transform:scaleX(0.8621);">0,00</div>
<div class="t" style="top:351.68px;font-size:8.82px;color:#3f4246;left:937.60px;transform-origin:0 0;transform:scaleX(0.8621);">EUR</div>
<svg style="left:0;top:0" width="1024" height="538"><polyline points="976.2,353.98 980.2,357.58 976.2,361.18" fill="none" stroke="#2a68b8" stroke-width="1.2"/></svg>
<div class="t" style="top:369.94px;font-size:8.82px;color:#3f4246;left:49.20px;transform-origin:0 0;transform:scaleX(0.8621);">C1001</div>
<div class="t" style="top:369.94px;font-size:8.82px;color:#3f4246;left:120.00px;transform-origin:0 0;transform:scaleX(0.8621);">C1009</div>
<div class="t" style="top:369.94px;font-size:8.82px;color:#3f4246;left:191.00px;transform-origin:0 0;transform:scaleX(0.8621);width:112.52px;overflow:hidden;text-overflow:ellipsis;">Intercompany AR-&gt;AP (10...</div>
<div class="t" style="top:369.94px;font-size:8.82px;color:#3f4246;left:297.00px;transform-origin:0 0;transform:scaleX(0.8621);">EUR</div>
<div class="t" style="top:369.94px;font-size:8.82px;color:#3f4246;right:622.90px;text-align:right;transform-origin:100% 0;transform:scaleX(0.8621);">54.425,00</div>
<div class="t" style="top:369.94px;font-size:8.82px;color:#3f4246;left:407.60px;transform-origin:0 0;transform:scaleX(0.8621);">EUR</div>
<div class="t" style="top:369.94px;font-size:8.82px;color:#3f4246;right:526.00px;text-align:right;transform-origin:100% 0;transform:scaleX(0.8621);">-54.425,00</div>
<div class="t" style="top:369.94px;font-size:8.82px;color:#3f4246;left:504.50px;transform-origin:0 0;transform:scaleX(0.8621);">EUR</div>
<div class="t" style="top:369.94px;font-size:8.82px;color:#2f9558;right:427.10px;text-align:right;transform-origin:100% 0;transform:scaleX(0.8621);">0,00 EUR</div>
<div class="t" style="top:369.94px;font-size:8.82px;color:#3f4246;right:358.10px;text-align:right;transform-origin:100% 0;transform:scaleX(0.8621);">54.425,00</div>
<div class="t" style="top:369.94px;font-size:8.82px;color:#3f4246;left:672.40px;transform-origin:0 0;transform:scaleX(0.8621);">EUR</div>
<div class="t" style="top:369.94px;font-size:8.82px;color:#3f4246;right:261.20px;text-align:right;transform-origin:100% 0;transform:scaleX(0.8621);">-54.425,00</div>
<div class="t" style="top:369.94px;font-size:8.82px;color:#3f4246;left:769.30px;transform-origin:0 0;transform:scaleX(0.8621);">EUR</div>
<div class="t" style="top:369.94px;font-size:8.82px;color:#2f9558;right:161.60px;text-align:right;transform-origin:100% 0;transform:scaleX(0.8621);">0,00 EUR</div>
<div class="t" style="top:369.94px;font-size:8.82px;color:#3f4246;right:92.90px;text-align:right;transform-origin:100% 0;transform:scaleX(0.8621);">0,00</div>
<div class="t" style="top:369.94px;font-size:8.82px;color:#3f4246;left:937.60px;transform-origin:0 0;transform:scaleX(0.8621);">EUR</div>
<svg style="left:0;top:0" width="1024" height="538"><polyline points="976.2,372.24 980.2,375.84 976.2,379.44" fill="none" stroke="#2a68b8" stroke-width="1.2"/></svg>
<div class="t" style="top:388.20px;font-size:8.82px;color:#3f4246;left:49.20px;transform-origin:0 0;transform:scaleX(0.8621);">C1001</div>
<div class="t" style="top:388.20px;font-size:8.82px;color:#3f4246;left:120.00px;transform-origin:0 0;transform:scaleX(0.8621);">C1010</div>
<div class="t" style="top:388.20px;font-size:8.82px;color:#3f4246;left:191.00px;transform-origin:0 0;transform:scaleX(0.8621);width:112.52px;overflow:hidden;text-overflow:ellipsis;">Intercompany AR-&gt;AP (10...</div>
<div class="t" style="top:388.20px;font-size:8.82px;color:#3f4246;left:297.00px;transform-origin:0 0;transform:scaleX(0.8621);">EUR</div>
<div class="t" style="top:388.20px;font-size:8.82px;color:#3f4246;right:622.90px;text-align:right;transform-origin:100% 0;transform:scaleX(0.8621);">69.279,00</div>
<div class="t" style="top:388.20px;font-size:8.82px;color:#3f4246;left:407.60px;transform-origin:0 0;transform:scaleX(0.8621);">EUR</div>
<div class="t" style="top:388.20px;font-size:8.82px;color:#3f4246;right:526.00px;text-align:right;transform-origin:100% 0;transform:scaleX(0.8621);">-69.279,00</div>
<div class="t" style="top:388.20px;font-size:8.82px;color:#3f4246;left:504.50px;transform-origin:0 0;transform:scaleX(0.8621);">EUR</div>
<div class="t" style="top:388.20px;font-size:8.82px;color:#2f9558;right:427.10px;text-align:right;transform-origin:100% 0;transform:scaleX(0.8621);">0,00 EUR</div>
<div class="t" style="top:388.20px;font-size:8.82px;color:#3f4246;right:358.10px;text-align:right;transform-origin:100% 0;transform:scaleX(0.8621);">69.279,00</div>
<div class="t" style="top:388.20px;font-size:8.82px;color:#3f4246;left:672.40px;transform-origin:0 0;transform:scaleX(0.8621);">EUR</div>
<div class="t" style="top:388.20px;font-size:8.82px;color:#3f4246;right:261.20px;text-align:right;transform-origin:100% 0;transform:scaleX(0.8621);">-69.279,00</div>
<div class="t" style="top:388.20px;font-size:8.82px;color:#3f4246;left:769.30px;transform-origin:0 0;transform:scaleX(0.8621);">EUR</div>
<div class="t" style="top:388.20px;font-size:8.82px;color:#2f9558;right:161.60px;text-align:right;transform-origin:100% 0;transform:scaleX(0.8621);">0,00 EUR</div>
<div class="t" style="top:388.20px;font-size:8.82px;color:#3f4246;right:92.90px;text-align:right;transform-origin:100% 0;transform:scaleX(0.8621);">0,00</div>
<div class="t" style="top:388.20px;font-size:8.82px;color:#3f4246;left:937.60px;transform-origin:0 0;transform:scaleX(0.8621);">EUR</div>
<svg style="left:0;top:0" width="1024" height="538"><polyline points="976.2,390.50 980.2,394.10 976.2,397.70" fill="none" stroke="#2a68b8" stroke-width="1.2"/></svg>
<div class="t" style="top:406.46px;font-size:8.82px;color:#3f4246;left:49.20px;transform-origin:0 0;transform:scaleX(0.8621);">C1001</div>
<div class="t" style="top:406.46px;font-size:8.82px;color:#3f4246;left:120.00px;transform-origin:0 0;transform:scaleX(0.8621);">C1011</div>
<div class="t" style="top:406.46px;font-size:8.82px;color:#3f4246;left:191.00px;transform-origin:0 0;transform:scaleX(0.8621);width:112.52px;overflow:hidden;text-overflow:ellipsis;">Intercompany AR-&gt;AP (10...</div>
<div class="t" style="top:406.46px;font-size:8.82px;color:#3f4246;left:297.00px;transform-origin:0 0;transform:scaleX(0.8621);">EUR</div>
<div class="t" style="top:406.46px;font-size:8.82px;color:#3f4246;right:622.90px;text-align:right;transform-origin:100% 0;transform:scaleX(0.8621);">55.869,00</div>
<div class="t" style="top:406.46px;font-size:8.82px;color:#3f4246;left:407.60px;transform-origin:0 0;transform:scaleX(0.8621);">EUR</div>
<div class="t" style="top:406.46px;font-size:8.82px;color:#3f4246;right:526.00px;text-align:right;transform-origin:100% 0;transform:scaleX(0.8621);">-55.869,00</div>
<div class="t" style="top:406.46px;font-size:8.82px;color:#3f4246;left:504.50px;transform-origin:0 0;transform:scaleX(0.8621);">EUR</div>
<div class="t" style="top:406.46px;font-size:8.82px;color:#2f9558;right:427.10px;text-align:right;transform-origin:100% 0;transform:scaleX(0.8621);">0,00 EUR</div>
<div class="t" style="top:406.46px;font-size:8.82px;color:#3f4246;right:358.10px;text-align:right;transform-origin:100% 0;transform:scaleX(0.8621);">55.869,00</div>
<div class="t" style="top:406.46px;font-size:8.82px;color:#3f4246;left:672.40px;transform-origin:0 0;transform:scaleX(0.8621);">EUR</div>
<div class="t" style="top:406.46px;font-size:8.82px;color:#3f4246;right:261.20px;text-align:right;transform-origin:100% 0;transform:scaleX(0.8621);">-55.869,00</div>
<div class="t" style="top:406.46px;font-size:8.82px;color:#3f4246;left:769.30px;transform-origin:0 0;transform:scaleX(0.8621);">EUR</div>
<div class="t" style="top:406.46px;font-size:8.82px;color:#2f9558;right:161.60px;text-align:right;transform-origin:100% 0;transform:scaleX(0.8621);">0,00 EUR</div>
<div class="t" style="top:406.46px;font-size:8.82px;color:#3f4246;right:92.90px;text-align:right;transform-origin:100% 0;transform:scaleX(0.8621);">0,00</div>
<div class="t" style="top:406.46px;font-size:8.82px;color:#3f4246;left:937.60px;transform-origin:0 0;transform:scaleX(0.8621);">EUR</div>
<svg style="left:0;top:0" width="1024" height="538"><polyline points="976.2,408.76 980.2,412.36 976.2,415.96" fill="none" stroke="#2a68b8" stroke-width="1.2"/></svg>
<div class="t" style="top:424.72px;font-size:8.82px;color:#3f4246;left:49.20px;transform-origin:0 0;transform:scaleX(0.8621);">C1001</div>
<div class="t" style="top:424.72px;font-size:8.82px;color:#3f4246;left:120.00px;transform-origin:0 0;transform:scaleX(0.8621);">C1012</div>
<div class="t" style="top:424.72px;font-size:8.82px;color:#3f4246;left:191.00px;transform-origin:0 0;transform:scaleX(0.8621);width:112.52px;overflow:hidden;text-overflow:ellipsis;">Intercompany AR-&gt;AP (10...</div>
<div class="t" style="top:424.72px;font-size:8.82px;color:#3f4246;left:297.00px;transform-origin:0 0;transform:scaleX(0.8621);">EUR</div>
<div class="t" style="top:424.72px;font-size:8.82px;color:#3f4246;right:622.90px;text-align:right;transform-origin:100% 0;transform:scaleX(0.8621);">65.659,00</div>
<div class="t" style="top:424.72px;font-size:8.82px;color:#3f4246;left:407.60px;transform-origin:0 0;transform:scaleX(0.8621);">EUR</div>
<div class="t" style="top:424.72px;font-size:8.82px;color:#3f4246;right:526.00px;text-align:right;transform-origin:100% 0;transform:scaleX(0.8621);">-65.659,00</div>
<div class="t" style="top:424.72px;font-size:8.82px;color:#3f4246;left:504.50px;transform-origin:0 0;transform:scaleX(0.8621);">EUR</div>
<div class="t" style="top:424.72px;font-size:8.82px;color:#2f9558;right:427.10px;text-align:right;transform-origin:100% 0;transform:scaleX(0.8621);">0,00 EUR</div>
<div class="t" style="top:424.72px;font-size:8.82px;color:#3f4246;right:358.10px;text-align:right;transform-origin:100% 0;transform:scaleX(0.8621);">65.659,00</div>
<div class="t" style="top:424.72px;font-size:8.82px;color:#3f4246;left:672.40px;transform-origin:0 0;transform:scaleX(0.8621);">EUR</div>
<div class="t" style="top:424.72px;font-size:8.82px;color:#3f4246;right:261.20px;text-align:right;transform-origin:100% 0;transform:scaleX(0.8621);">-65.659,00</div>
<div class="t" style="top:424.72px;font-size:8.82px;color:#3f4246;left:769.30px;transform-origin:0 0;transform:scaleX(0.8621);">EUR</div>
<div class="t" style="top:424.72px;font-size:8.82px;color:#2f9558;right:161.60px;text-align:right;transform-origin:100% 0;transform:scaleX(0.8621);">0,00 EUR</div>
<div class="t" style="top:424.72px;font-size:8.82px;color:#3f4246;right:92.90px;text-align:right;transform-origin:100% 0;transform:scaleX(0.8621);">0,00</div>
<div class="t" style="top:424.72px;font-size:8.82px;color:#3f4246;left:937.60px;transform-origin:0 0;transform:scaleX(0.8621);">EUR</div>
<svg style="left:0;top:0" width="1024" height="538"><polyline points="976.2,427.02 980.2,430.62 976.2,434.22" fill="none" stroke="#2a68b8" stroke-width="1.2"/></svg>
<div class="t" style="top:442.98px;font-size:8.82px;color:#3f4246;left:49.20px;transform-origin:0 0;transform:scaleX(0.8621);">C1001</div>
<div class="t" style="top:442.98px;font-size:8.82px;color:#3f4246;left:120.00px;transform-origin:0 0;transform:scaleX(0.8621);">C1013</div>
<div class="t" style="top:442.98px;font-size:8.82px;color:#3f4246;left:191.00px;transform-origin:0 0;transform:scaleX(0.8621);width:112.52px;overflow:hidden;text-overflow:ellipsis;">Intercompany AR-&gt;AP (10...</div>
<div class="t" style="top:442.98px;font-size:8.82px;color:#3f4246;left:297.00px;transform-origin:0 0;transform:scaleX(0.8621);">EUR</div>
<div class="t" style="top:442.98px;font-size:8.82px;color:#3f4246;right:622.90px;text-align:right;transform-origin:100% 0;transform:scaleX(0.8621);">51.164,00</div>
<div class="t" style="top:442.98px;font-size:8.82px;color:#3f4246;left:407.60px;transform-origin:0 0;transform:scaleX(0.8621);">EUR</div>
<div class="t" style="top:442.98px;font-size:8.82px;color:#3f4246;right:526.00px;text-align:right;transform-origin:100% 0;transform:scaleX(0.8621);">-51.164,00</div>
<div class="t" style="top:442.98px;font-size:8.82px;color:#3f4246;left:504.50px;transform-origin:0 0;transform:scaleX(0.8621);">EUR</div>
<div class="t" style="top:442.98px;font-size:8.82px;color:#2f9558;right:427.10px;text-align:right;transform-origin:100% 0;transform:scaleX(0.8621);">0,00 EUR</div>
<div class="t" style="top:442.98px;font-size:8.82px;color:#3f4246;right:358.10px;text-align:right;transform-origin:100% 0;transform:scaleX(0.8621);">51.164,00</div>
<div class="t" style="top:442.98px;font-size:8.82px;color:#3f4246;left:672.40px;transform-origin:0 0;transform:scaleX(0.8621);">EUR</div>
<div class="t" style="top:442.98px;font-size:8.82px;color:#3f4246;right:261.20px;text-align:right;transform-origin:100% 0;transform:scaleX(0.8621);">-51.164,00</div>
<div class="t" style="top:442.98px;font-size:8.82px;color:#3f4246;left:769.30px;transform-origin:0 0;transform:scaleX(0.8621);">EUR</div>
<div class="t" style="top:442.98px;font-size:8.82px;color:#2f9558;right:161.60px;text-align:right;transform-origin:100% 0;transform:scaleX(0.8621);">0,00 EUR</div>
<div class="t" style="top:442.98px;font-size:8.82px;color:#3f4246;right:92.90px;text-align:right;transform-origin:100% 0;transform:scaleX(0.8621);">0,00</div>
<div class="t" style="top:442.98px;font-size:8.82px;color:#3f4246;left:937.60px;transform-origin:0 0;transform:scaleX(0.8621);">EUR</div>
<svg style="left:0;top:0" width="1024" height="538"><polyline points="976.2,445.28 980.2,448.88 976.2,452.48" fill="none" stroke="#2a68b8" stroke-width="1.2"/></svg>
<div class="t" style="top:461.24px;font-size:8.82px;color:#3f4246;left:49.20px;transform-origin:0 0;transform:scaleX(0.8621);">C1001</div>
<div class="t" style="top:461.24px;font-size:8.82px;color:#3f4246;left:120.00px;transform-origin:0 0;transform:scaleX(0.8621);">C1014</div>
<div class="t" style="top:461.24px;font-size:8.82px;color:#3f4246;left:191.00px;transform-origin:0 0;transform:scaleX(0.8621);width:112.52px;overflow:hidden;text-overflow:ellipsis;">Intercompany AR-&gt;AP (10...</div>
<div class="t" style="top:461.24px;font-size:8.82px;color:#3f4246;left:297.00px;transform-origin:0 0;transform:scaleX(0.8621);">EUR</div>
<div class="t" style="top:461.24px;font-size:8.82px;color:#3f4246;right:622.90px;text-align:right;transform-origin:100% 0;transform:scaleX(0.8621);">45.488,00</div>
<div class="t" style="top:461.24px;font-size:8.82px;color:#3f4246;left:407.60px;transform-origin:0 0;transform:scaleX(0.8621);">EUR</div>
<div class="t" style="top:461.24px;font-size:8.82px;color:#3f4246;right:526.00px;text-align:right;transform-origin:100% 0;transform:scaleX(0.8621);">-45.488,00</div>
<div class="t" style="top:461.24px;font-size:8.82px;color:#3f4246;left:504.50px;transform-origin:0 0;transform:scaleX(0.8621);">EUR</div>
<div class="t" style="top:461.24px;font-size:8.82px;color:#2f9558;right:427.10px;text-align:right;transform-origin:100% 0;transform:scaleX(0.8621);">0,00 EUR</div>
<div class="t" style="top:461.24px;font-size:8.82px;color:#3f4246;right:358.10px;text-align:right;transform-origin:100% 0;transform:scaleX(0.8621);">45.488,00</div>
<div class="t" style="top:461.24px;font-size:8.82px;color:#3f4246;left:672.40px;transform-origin:0 0;transform:scaleX(0.8621);">EUR</div>
<div class="t" style="top:461.24px;font-size:8.82px;color:#3f4246;right:261.20px;text-align:right;transform-origin:100% 0;transform:scaleX(0.8621);">-45.488,00</div>
<div class="t" style="top:461.24px;font-size:8.82px;color:#3f4246;left:769.30px;transform-origin:0 0;transform:scaleX(0.8621);">EUR</div>
<div class="t" style="top:461.24px;font-size:8.82px;color:#2f9558;right:161.60px;text-align:right;transform-origin:100% 0;transform:scaleX(0.8621);">0,00 EUR</div>
<div class="t" style="top:461.24px;font-size:8.82px;color:#3f4246;right:92.90px;text-align:right;transform-origin:100% 0;transform:scaleX(0.8621);">0,00</div>
<div class="t" style="top:461.24px;font-size:8.82px;color:#3f4246;left:937.60px;transform-origin:0 0;transform:scaleX(0.8621);">EUR</div>
<svg style="left:0;top:0" width="1024" height="538"><polyline points="976.2,463.54 980.2,467.14 976.2,470.74" fill="none" stroke="#2a68b8" stroke-width="1.2"/></svg>
<div class="t" style="top:479.50px;font-size:8.82px;color:#3f4246;left:49.20px;transform-origin:0 0;transform:scaleX(0.8621);">C1001</div>
<div class="t" style="top:479.50px;font-size:8.82px;color:#3f4246;left:120.00px;transform-origin:0 0;transform:scaleX(0.8621);">C1015</div>
<div class="t" style="top:479.50px;font-size:8.82px;color:#3f4246;left:191.00px;transform-origin:0 0;transform:scaleX(0.8621);width:112.52px;overflow:hidden;text-overflow:ellipsis;">Intercompany AR-&gt;AP (10...</div>
<div class="t" style="top:479.50px;font-size:8.82px;color:#3f4246;left:297.00px;transform-origin:0 0;transform:scaleX(0.8621);">EUR</div>
<div class="t" style="top:479.50px;font-size:8.82px;color:#3f4246;right:622.90px;text-align:right;transform-origin:100% 0;transform:scaleX(0.8621);">64.774,00</div>
<div class="t" style="top:479.50px;font-size:8.82px;color:#3f4246;left:407.60px;transform-origin:0 0;transform:scaleX(0.8621);">EUR</div>
<div class="t" style="top:479.50px;font-size:8.82px;color:#3f4246;right:526.00px;text-align:right;transform-origin:100% 0;transform:scaleX(0.8621);">-64.774,00</div>
<div class="t" style="top:479.50px;font-size:8.82px;color:#3f4246;left:504.50px;transform-origin:0 0;transform:scaleX(0.8621);">EUR</div>
<div class="t" style="top:479.50px;font-size:8.82px;color:#2f9558;right:427.10px;text-align:right;transform-origin:100% 0;transform:scaleX(0.8621);">0,00 EUR</div>
<div class="t" style="top:479.50px;font-size:8.82px;color:#3f4246;right:358.10px;text-align:right;transform-origin:100% 0;transform:scaleX(0.8621);">64.774,00</div>
<div class="t" style="top:479.50px;font-size:8.82px;color:#3f4246;left:672.40px;transform-origin:0 0;transform:scaleX(0.8621);">EUR</div>
<div class="t" style="top:479.50px;font-size:8.82px;color:#3f4246;right:261.20px;text-align:right;transform-origin:100% 0;transform:scaleX(0.8621);">-64.774,00</div>
<div class="t" style="top:479.50px;font-size:8.82px;color:#3f4246;left:769.30px;transform-origin:0 0;transform:scaleX(0.8621);">EUR</div>
<div class="t" style="top:479.50px;font-size:8.82px;color:#2f9558;right:161.60px;text-align:right;transform-origin:100% 0;transform:scaleX(0.8621);">0,00 EUR</div>
<div class="t" style="top:479.50px;font-size:8.82px;color:#3f4246;right:92.90px;text-align:right;transform-origin:100% 0;transform:scaleX(0.8621);">0,00</div>
<div class="t" style="top:479.50px;font-size:8.82px;color:#3f4246;left:937.60px;transform-origin:0 0;transform:scaleX(0.8621);">EUR</div>
<svg style="left:0;top:0" width="1024" height="538"><polyline points="976.2,481.80 980.2,485.40 976.2,489.00" fill="none" stroke="#2a68b8" stroke-width="1.2"/></svg>
<div class="t" style="top:497.76px;font-size:8.82px;color:#3f4246;left:49.20px;transform-origin:0 0;transform:scaleX(0.8621);">C1001</div>
<div class="t" style="top:497.76px;font-size:8.82px;color:#3f4246;left:120.00px;transform-origin:0 0;transform:scaleX(0.8621);">C1016</div>
<div class="t" style="top:497.76px;font-size:8.82px;color:#3f4246;left:191.00px;transform-origin:0 0;transform:scaleX(0.8621);width:112.52px;overflow:hidden;text-overflow:ellipsis;">Intercompany AR-&gt;AP (10...</div>
<div class="t" style="top:497.76px;font-size:8.82px;color:#3f4246;left:297.00px;transform-origin:0 0;transform:scaleX(0.8621);">EUR</div>
<div class="t" style="top:497.76px;font-size:8.82px;color:#3f4246;right:622.90px;text-align:right;transform-origin:100% 0;transform:scaleX(0.8621);">57.667,00</div>
<div class="t" style="top:497.76px;font-size:8.82px;color:#3f4246;left:407.60px;transform-origin:0 0;transform:scaleX(0.8621);">EUR</div>
<div class="t" style="top:497.76px;font-size:8.82px;color:#3f4246;right:526.00px;text-align:right;transform-origin:100% 0;transform:scaleX(0.8621);">-57.667,00</div>
<div class="t" style="top:497.76px;font-size:8.82px;color:#3f4246;left:504.50px;transform-origin:0 0;transform:scaleX(0.8621);">EUR</div>
<div class="t" style="top:497.76px;font-size:8.82px;color:#2f9558;right:427.10px;text-align:right;transform-origin:100% 0;transform:scaleX(0.8621);">0,00 EUR</div>
<div class="t" style="top:497.76px;font-size:8.82px;color:#3f4246;right:358.10px;text-align:right;transform-origin:100% 0;transform:scaleX(0.8621);">57.667,00</div>
<div class="t" style="top:497.76px;font-size:8.82px;color:#3f4246;left:672.40px;transform-origin:0 0;transform:scaleX(0.8621);">EUR</div>
<div class="t" style="top:497.76px;font-size:8.82px;color:#3f4246;right:261.20px;text-align:right;transform-origin:100% 0;transform:scaleX(0.8621);">-57.667,00</div>
<div class="t" style="top:497.76px;font-size:8.82px;color:#3f4246;left:769.30px;transform-origin:0 0;transform:scaleX(0.8621);">EUR</div>
<div class="t" style="top:497.76px;font-size:8.82px;color:#2f9558;right:161.60px;text-align:right;transform-origin:100% 0;transform:scaleX(0.8621);">0,00 EUR</div>
<div class="t" style="top:497.76px;font-size:8.82px;color:#3f4246;right:92.90px;text-align:right;transform-origin:100% 0;transform:scaleX(0.8621);">0,00</div>
<div class="t" style="top:497.76px;font-size:8.82px;color:#3f4246;left:937.60px;transform-origin:0 0;transform:scaleX(0.8621);">EUR</div>
<svg style="left:0;top:0" width="1024" height="538"><polyline points="976.2,500.06 980.2,503.66 976.2,507.26" fill="none" stroke="#2a68b8" stroke-width="1.2"/></svg>
<div class="t" style="top:516.50px;font-size:8px;color:#6a6d70;left:296.40px;transform-origin:0 0;">*</div>
<div class="t" style="top:517.10px;font-size:7.83px;color:#2f7ed6;font-weight:700;right:595.70px;text-align:right;transform-origin:100% 0;transform:scaleX(0.9615);">Show Details</div>
<div class="t" style="top:517.10px;font-size:7.83px;color:#2f7ed6;font-weight:700;right:498.10px;text-align:right;transform-origin:100% 0;transform:scaleX(0.9615);">Show Details</div>
<div class="t" style="top:517.10px;font-size:7.83px;color:#2f7ed6;font-weight:700;right:330.50px;text-align:right;transform-origin:100% 0;transform:scaleX(0.9615);">Show Details</div>
<div class="t" style="top:517.10px;font-size:7.83px;color:#2f7ed6;font-weight:700;right:233.00px;text-align:right;transform-origin:100% 0;transform:scaleX(0.9615);">Show Details</div>
<div class="t" style="top:517.10px;font-size:7.83px;color:#2f7ed6;font-weight:700;right:65.40px;text-align:right;transform-origin:100% 0;transform:scaleX(0.9615);">Show Details</div>
<div class="r" style="left:338.7px;top:165.3px;width:256px;height:14px;border:2px solid #f5474b;box-shadow:1px 2px 3px rgba(0,0,0,0.3), inset 1px 2px 2px rgba(0,0,0,0.2)"></div>
<div class="r" style="left:604.2px;top:164.9px;width:258.6px;height:14.4px;border:2px solid #22a987;box-shadow:1px 2px 3px rgba(0,0,0,0.3), inset 1px 2px 2px rgba(0,0,0,0.2)"></div>
</div></body></html>
